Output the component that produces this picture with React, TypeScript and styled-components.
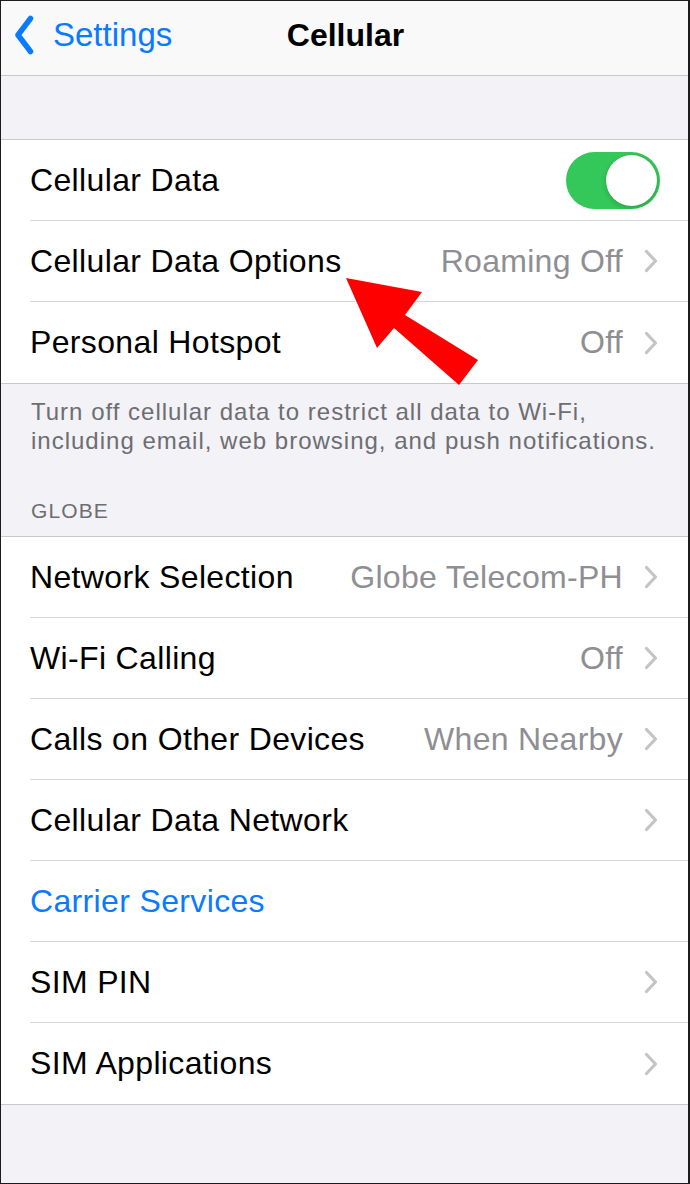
import styled, { createGlobalStyle } from 'styled-components';

const GlobalStyle = createGlobalStyle`
  html, body {
    margin: 0;
    padding: 0;
    background: #ffffff;
  }
  body {
    font-family: 'Liberation Sans', Arial, sans-serif;
    -webkit-font-smoothing: antialiased;
  }
  * { box-sizing: border-box; }
`;

const Screen = styled.div`
  position: relative;
  width: 690px;
  height: 1184px;
  overflow: hidden;
  background: #f2f2f7;
  border: 1px solid #1c1c1c;
  border-right-width: 2px;
  display: flex;
  flex-direction: column;
`;

const NavBar = styled.div`
  height: 75px;
  flex-shrink: 0;
  background: #f9f9f9;
  border-bottom: 1px solid #c8c7cc;
  display: grid;
  grid-template-columns: 1fr auto 1fr;
  align-items: center;
  padding-bottom: 6px;
`;

const BackButton = styled.div`
  display: flex;
  align-items: center;
  gap: 19px;
  padding-left: 13px;
  color: #0a7aff;
  font-size: 33px;
`;

const NavTitle = styled.div`
  font-size: 32px;
  font-weight: 700;
  color: #000;
  margin-left: 2px;
`;

const Spacer = styled.div<{ $h: number }>`
  height: ${(p) => p.$h}px;
  flex-shrink: 0;
`;

const Group = styled.div`
  background: #ffffff;
  border-top: 1px solid #c8c7cc;
  border-bottom: 1px solid #c8c7cc;
  flex-shrink: 0;
`;

const Row = styled.div`
  display: flex;
  padding-left: 29px;
  &:last-child > div {
    border-bottom: none;
  }
`;

const RowBody = styled.div`
  flex: 1;
  height: 81px;
  display: flex;
  align-items: center;
  border-bottom: 1px solid #d8d8dc;
  padding-right: 30px;
`;

const Label = styled.div<{ $link?: boolean }>`
  flex: 1;
  font-size: 32px;
  letter-spacing: 0.35px;
  color: ${(p) => (p.$link ? '#0a7aff' : '#000000')};
  white-space: nowrap;
`;

const Value = styled.div`
  font-size: 32px;
  letter-spacing: 0.3px;
  color: #8e8e93;
  margin-right: 21px;
  white-space: nowrap;
`;

const Toggle = styled.div<{ $on: boolean }>`
  width: 94px;
  height: 57px;
  border-radius: 29px;
  background: ${(p) => (p.$on ? '#34c759' : '#e9e9eb')};
  display: flex;
  align-items: center;
  justify-content: ${(p) => (p.$on ? 'flex-end' : 'flex-start')};
  padding: 0 3px;
  margin-right: -2px;
`;

const Knob = styled.div`
  width: 51px;
  height: 51px;
  border-radius: 50%;
  background: #ffffff;
  box-shadow: 0 2px 5px rgba(0, 0, 0, 0.18), 0 0 1px rgba(0, 0, 0, 0.15);
`;

const Footer = styled.div`
  padding: 13px 20px 0 30px;
  font-size: 24px;
  letter-spacing: 1px;
  line-height: 29px;
  color: #6d6d72;
  white-space: nowrap;
  flex-shrink: 0;
`;

const SectionHeader = styled.div`
  padding: 43px 30px 12px 30px;
  font-size: 21px;
  letter-spacing: 1.1px;
  line-height: 26px;
  color: #6d6d72;
  text-transform: uppercase;
  flex-shrink: 0;
`;

const ArrowOverlay = styled.svg`
  position: absolute;
  left: 0;
  top: 0;
  pointer-events: none;
`;

const Chevron = () => (
  <svg width="14" height="24" viewBox="0 0 14 24">
    <path
      d="M2.5 2.5 L11.5 12 L2.5 21.5"
      fill="none"
      stroke="#c4c4c7"
      strokeWidth="3.2"
      strokeLinecap="round"
      strokeLinejoin="round"
    />
  </svg>
);

const BackChevron = () => (
  <svg width="20" height="40" viewBox="0 0 20 40">
    <path
      d="M16.5 3.5 L4 20 L16.5 36.5"
      fill="none"
      stroke="#0a7aff"
      strokeWidth="5.5"
      strokeLinecap="round"
      strokeLinejoin="round"
    />
  </svg>
);

interface Item {
  label: string;
  value?: string;
  chevron?: boolean;
  link?: boolean;
  toggle?: boolean;
}

const firstGroup: Item[] = [
  { label: 'Cellular Data', toggle: true },
  { label: 'Cellular Data Options', value: 'Roaming Off', chevron: true },
  { label: 'Personal Hotspot', value: 'Off', chevron: true },
];

const globeGroup: Item[] = [
  { label: 'Network Selection', value: 'Globe Telecom-PH', chevron: true },
  { label: 'Wi-Fi Calling', value: 'Off', chevron: true },
  { label: 'Calls on Other Devices', value: 'When Nearby', chevron: true },
  { label: 'Cellular Data Network', chevron: true },
  { label: 'Carrier Services', link: true },
  { label: 'SIM PIN', chevron: true },
  { label: 'SIM Applications', chevron: true },
];

const SettingsRow = ({ item }: { item: Item }) => (
  <Row>
    <RowBody>
      <Label $link={item.link}>{item.label}</Label>
      {item.value && <Value>{item.value}</Value>}
      {item.chevron && <Chevron />}
      {item.toggle && (
        <Toggle $on>
          <Knob />
        </Toggle>
      )}
    </RowBody>
  </Row>
);

const App = () => {
  return (
    <>
      <GlobalStyle />
      <Screen>
        <NavBar>
          <BackButton>
            <BackChevron />
            <span>Settings</span>
          </BackButton>
          <NavTitle>Cellular</NavTitle>
          <div />
        </NavBar>
        <Spacer $h={63} />
        <Group>
          {firstGroup.map((item) => (
            <SettingsRow key={item.label} item={item} />
          ))}
        </Group>
        <Footer>
          Turn off cellular data to restrict all data to Wi-Fi,
          <br />
          including email, web browsing, and push notifications.
        </Footer>
        <SectionHeader>Globe</SectionHeader>
        <Group>
          {globeGroup.map((item) => (
            <SettingsRow key={item.label} item={item} />
          ))}
        </Group>
        <ArrowOverlay width="690" height="1184" viewBox="0 0 690 1184">
          <polygon
            points="345,277 421,291 404,314 477,359 458,384 393,327 376,347"
            fill="#ff0000"
          />
        </ArrowOverlay>
      </Screen>
    </>
  );
};

export default App;
